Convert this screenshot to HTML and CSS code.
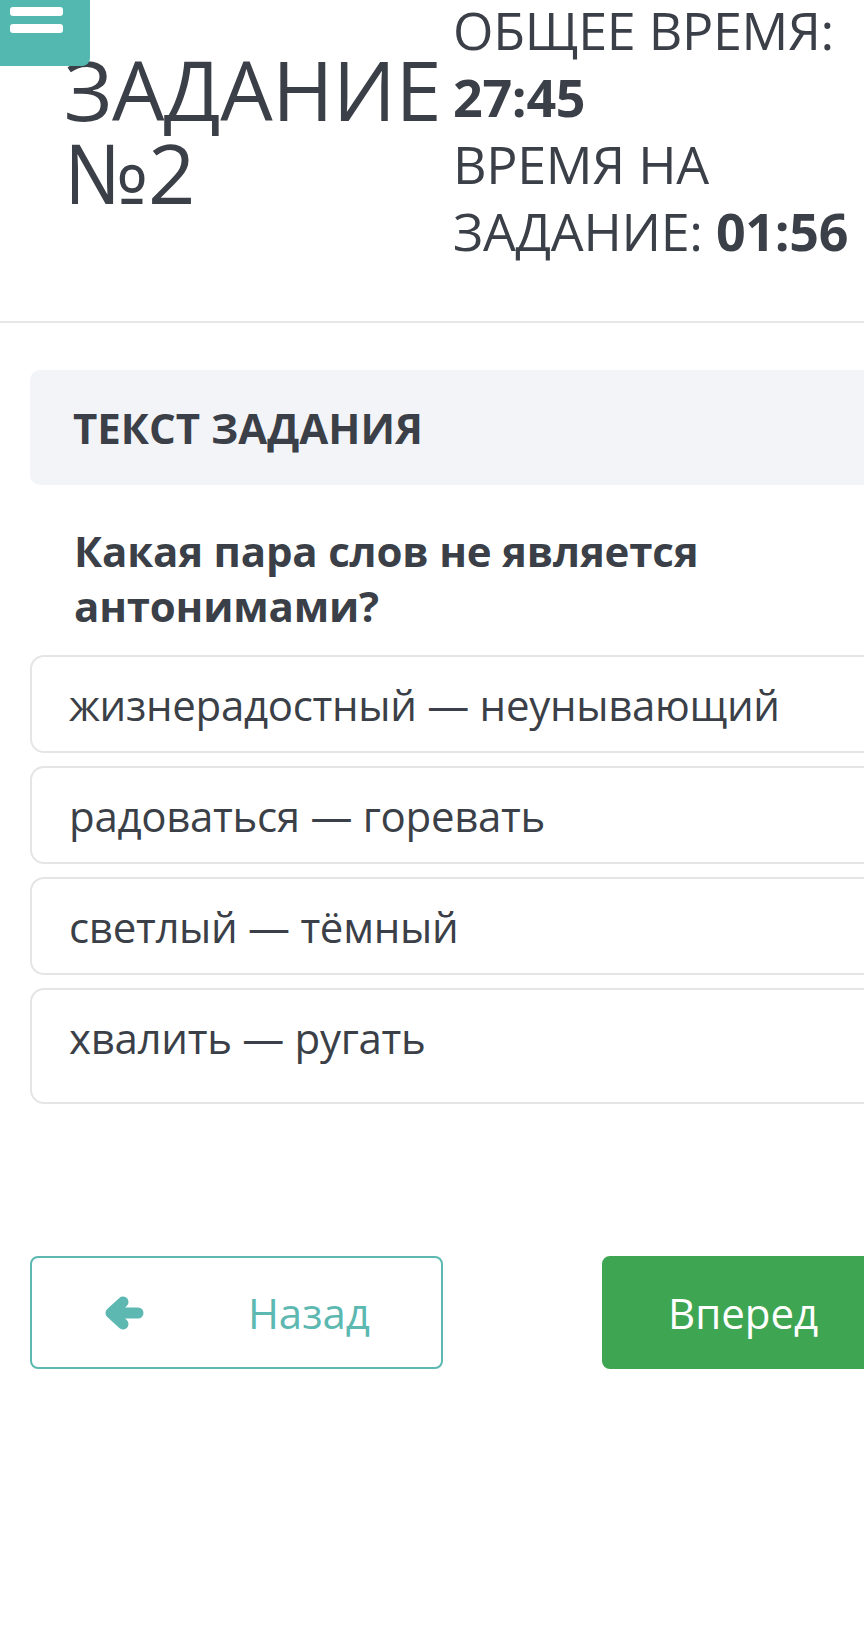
FILE: index.html
```html
<!DOCTYPE html>
<html lang="ru">
<head>
  <meta charset="utf-8">
  <title>Задание №2</title>
  <meta name="viewport" content="width=device-width, initial-scale=1.0">
  <link rel="stylesheet" href="styles.css">
</head>
<body>
  <div class="page">
    <button class="menu-btn" aria-label="Меню">
      <span class="bar"></span>
      <span class="bar"></span>
    </button>

    <header class="task-header">
      <h1 class="task-title">ЗАДАНИЕ №2</h1>
      <div class="timers">
        <div class="timer">ОБЩЕЕ ВРЕМЯ: <b>27:45</b></div>
        <div class="timer">ВРЕМЯ НА ЗАДАНИЕ: <b>01:56</b></div>
      </div>
    </header>

    <main class="task">
      <div class="task-head">ТЕКСТ ЗАДАНИЯ</div>
      <p class="question">Какая пара слов не является антонимами?</p>

      <ul class="answers">
        <li class="answer">жизнерадостный — неунывающий</li>
        <li class="answer">радоваться — горевать</li>
        <li class="answer">светлый — тёмный</li>
        <li class="answer">хвалить — ругать</li>
      </ul>

      <div class="nav">
        <button class="nav-btn nav-back">
          <svg class="arrow" viewBox="0 0 42 36" width="42" height="36"><path d="M9 18H35M20 7L8 18L20 29"/></svg>
          <span>Назад</span>
        </button>
        <button class="nav-btn nav-next">
          <span>Вперед</span>
          <svg class="arrow" viewBox="0 0 42 36" width="42" height="36"><path d="M33 18H7M22 7L34 18L22 29"/></svg>
        </button>
      </div>
    </main>
  </div>
</body>
</html>
```

FILE: styles.css
```css
html, body {
  margin: 0;
  padding: 0;
  overflow-x: hidden;
  background: #ffffff;
}
body {
  font-family: 'Open Sans', 'Noto Sans', sans-serif;
  color: #3b3f47;
}
.page {
  position: relative;
  display: flow-root;
  width: 1045px;
}

/* menu */
.menu-btn {
  position: absolute;
  top: 0;
  left: 0;
  width: 90px;
  height: 66px;
  padding: 7px 0 0 10px;
  border: none;
  border-radius: 0 0 8px 0;
  background-color: #53b8af;
  display: flex;
  flex-direction: column;
  align-items: flex-start;
  gap: 8px;
  z-index: 2;
}
.menu-btn .bar {
  display: block;
  width: 53px;
  height: 9px;
  border-radius: 3px;
  background: #ffffff;
}

/* header */
.task-header {
  display: flex;
  align-items: center;
  margin-top: -4px;
  padding: 0 0 57px 64px;
  border-bottom: 2px solid #e6e7e9;
}
.task-title {
  width: 389px;
  margin: 0;
  font-size: 83px;
  line-height: 83px;
  font-weight: 400;
  letter-spacing: -0.5px;
}
.timers {
  width: 410px;
  font-size: 52px;
  line-height: 67px;
  letter-spacing: -0.3px;
}
.timers b {
  font-weight: 700;
}

/* task */
.task {
  padding: 0 30px;
}
.task-head {
  margin-top: 47px;
  padding: 26px 43px;
  border-radius: 10px;
  background-color: #f3f4f8;
  font-size: 42px;
  line-height: 63px;
  font-weight: 700;
}
.question {
  margin: 38px 0 22px;
  padding: 0 44px;
  font-size: 42px;
  line-height: 55px;
  font-weight: 700;
  letter-spacing: -0.2px;
}
.answers {
  list-style: none;
  margin: 0;
  padding: 0;
  display: flex;
  flex-direction: column;
  gap: 13px;
}
.answer {
  padding: 15.5px 37px;
  border: 2px solid #e4e5e7;
  border-radius: 14px;
  font-size: 42px;
  line-height: 63px;
  letter-spacing: -0.3px;
}
.answer:last-child {
  padding-bottom: 33.5px;
}

/* navigation */
.nav {
  display: flex;
  justify-content: space-between;
  margin-top: 152px;
}
.nav-btn {
  width: 413px;
  height: 113px;
  display: flex;
  align-items: center;
  justify-content: space-between;
  border-radius: 8px;
  font-family: inherit;
  font-size: 42px;
  line-height: 63px;
  box-sizing: border-box;
}
.arrow path {
  fill: none;
  stroke-width: 11;
  stroke-linecap: round;
  stroke-linejoin: round;
}
.nav-back {
  padding: 0 71px;
  border: 2px solid #5cb8b1;
  background: #ffffff;
  color: #5cb8b1;
}
.nav-back .arrow path {
  stroke: #5cb8b1;
}
.nav-next {
  padding: 0 64px;
  border: 2px solid #3ea553;
  background: #3ea553;
  color: #ffffff;
}
.nav-next .arrow path {
  stroke: #ffffff;
}
```
